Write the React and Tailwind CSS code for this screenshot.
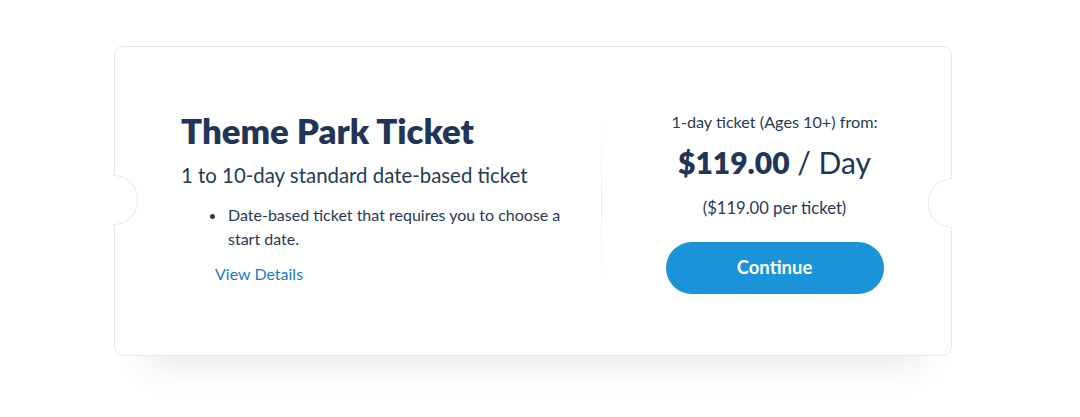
export default function App() {
  return (
    <div
      className="w-[1080px] h-[417px] bg-white flex pl-[114px] pt-[46px]"
      style={{ fontFamily: 'Lato, "Noto Sans", sans-serif' }}
    >
      <div className="relative w-[838px] h-[310px] bg-white border border-[#e9e9e9] rounded-[9px] shadow-[0_42px_32px_-30px_rgba(0,0,0,0.08)] flex items-center">
        {/* ticket notches */}
        <div className="absolute left-[-1px] top-[128px] w-[24px] h-[50px] bg-white border border-l-0 border-[#e9e9e9] rounded-r-full" />
        <div className="absolute right-[-1px] top-[131px] w-[24px] h-[50px] bg-white border border-r-0 border-[#e9e9e9] rounded-l-full" />

        <div className="w-[486px] pl-[66px] pb-[5px] text-[#273a54]">
          <h1 className="text-[34.8px] leading-[40px] font-extrabold text-[#1f3658]">
            Theme Park Ticket
          </h1>
          <p className="mt-[10px] text-[20.4px] leading-[28px]">1 to 10-day standard date-based ticket</p>
          <ul className="mt-[14px] ml-[46px] list-disc text-[16px] leading-[24px] w-[345px]">
            <li className="pl-[1px]">Date-based ticket that requires you to choose a start date.</li>
          </ul>
          <a href="#" className="block mt-[11px] ml-[34px] text-[16px] leading-[24px] text-[#1a79c3]">
            View Details
          </a>
        </div>

        <div className="w-px h-[168px] bg-gradient-to-b from-transparent via-[#ececec] to-transparent" />

        <div className="flex-1 flex flex-col items-center text-[#273a54] pt-[3px] pr-[4px]">
          <p className="text-[16.2px] leading-[22px]">1-day ticket (Ages 10+) from:</p>
          <p className="mt-[9px] text-[30px] leading-[40px] text-[#1f3658]">
            <span className="font-extrabold">$119.00</span>
            <span> / Day</span>
          </p>
          <p className="mt-[15px] text-[16.6px] leading-[22px]">($119.00 per ticket)</p>
          <button className="mt-[23px] w-[218px] h-[52px] rounded-full bg-[#1b93d8] text-white text-[18.5px] font-bold">
            Continue
          </button>
        </div>
      </div>
    </div>
  );
}
